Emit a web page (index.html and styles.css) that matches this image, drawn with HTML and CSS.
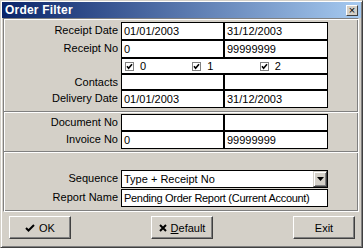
FILE: index.html
```html
<!DOCTYPE html>
<html lang="en">
<head>
  <meta charset="UTF-8" />
  <title>Order Filter</title>
  <link rel="stylesheet" href="styles.css">
</head>
<body>
  <div class="window">
    <div class="titlebar">
      <span class="title">Order Filter</span>
      <span class="close">&#215;</span>
    </div>

    <div class="panel">
      <div class="row">
        <div class="label">Receipt Date</div>
        <div class="cell">01/01/2003</div>
        <div class="cell wide">31/12/2003</div>
      </div>
      <div class="row">
        <div class="label">Receipt No</div>
        <div class="cell">0</div>
        <div class="cell wide">99999999</div>
      </div>
      <div class="row short">
        <div class="label"></div>
        <div class="cell full checks">
          <span class="check"><svg width="9" height="9" viewBox="0 0 9 9"><rect x="0.5" y="0.5" width="8" height="8" fill="#fff" stroke="#808080"/><path d="M2 4.2 L3.6 6.2 L7 2.2" fill="none" stroke="#000" stroke-width="1.6"/></svg>0</span>
          <span class="check"><svg width="9" height="9" viewBox="0 0 9 9"><rect x="0.5" y="0.5" width="8" height="8" fill="#fff" stroke="#808080"/><path d="M2 4.2 L3.6 6.2 L7 2.2" fill="none" stroke="#000" stroke-width="1.6"/></svg>1</span>
          <span class="check"><svg width="9" height="9" viewBox="0 0 9 9"><rect x="0.5" y="0.5" width="8" height="8" fill="#fff" stroke="#808080"/><path d="M2 4.2 L3.6 6.2 L7 2.2" fill="none" stroke="#000" stroke-width="1.6"/></svg>2</span>
        </div>
      </div>
      <div class="row short">
        <div class="label">Contacts</div>
        <div class="cell"></div>
        <div class="cell wide"></div>
      </div>
      <div class="row">
        <div class="label">Delivery Date</div>
        <div class="cell">01/01/2003</div>
        <div class="cell wide">31/12/2003</div>
      </div>

      <div class="sep"></div>

      <div class="row doc">
        <div class="label">Document No</div>
        <div class="cell"></div>
        <div class="cell wide"></div>
      </div>
      <div class="row">
        <div class="label">Invoice No</div>
        <div class="cell">0</div>
        <div class="cell wide">99999999</div>
      </div>

      <div class="sep sep2"></div>

      <div class="row seq">
        <div class="label">Sequence</div>
        <div class="cell full combo">
          <span>Type + Receipt No</span>
          <span class="drop"><svg width="7" height="4" viewBox="0 0 7 4"><path d="M0 0 H7 L3.5 4 Z" fill="#000"/></svg></span>
        </div>
      </div>
      <div class="row report">
        <div class="label">Report Name</div>
        <div class="cell full narrow">Pending Order Report (Current Account)</div>
      </div>
    </div>

    <div class="buttons">
      <button class="btn">
        <svg width="10" height="8" viewBox="0 0 10 8"><path d="M1 4 L3.5 6.5 L9 1" fill="none" stroke="#000" stroke-width="2"/></svg>
        OK
      </button>
      <button class="btn">
        <svg width="8" height="8" viewBox="0 0 8 8"><path d="M1 1 L7 7 M7 1 L1 7" stroke="#000" stroke-width="2"/></svg>
        <span><u>D</u>efault</span>
      </button>
      <button class="btn">Exit</button>
    </div>
  </div>
</body>
</html>
```

FILE: styles.css
```css
body {
  margin: 0;
  background-color: #d4d0c8;
  font-family: "Liberation Sans", Arial, sans-serif;
  font-size: 11px;
  color: #000;
}

.window {
  width: 363px;
  height: 248px;
  box-sizing: border-box;
  padding: 1px;
  border: 1px solid;
  border-color: #d4d0c8 #404040 #404040 #d4d0c8;
  box-shadow: inset 1px 1px #fff, inset -1px -1px #808080;
  background-color: #d4d0c8;
}

.titlebar {
  height: 16px;
  display: flex;
  align-items: center;
  justify-content: space-between;
  background: linear-gradient(to right, #0a246a, #a6caf0);
  padding: 0 3px 0 3px;
}

.title {
  color: #fff;
  font-weight: bold;
  font-size: 12px;
  letter-spacing: 0.2px;
}

.close {
  width: 12px;
  height: 11px;
  box-sizing: border-box;
  background-color: #d4d0c8;
  border: 1px solid;
  border-color: #fff #404040 #404040 #fff;
  font-size: 11px;
  line-height: 8px;
  text-align: center;
}

.panel {
  margin: 0 2px 0 1px;
  height: 194px;
  box-sizing: border-box;
  padding-top: 3px;
  border: 1px solid;
  border-color: #808080 #fff #fff #808080;
  box-shadow: inset 1px 1px #fff, inset -1px -1px #808080;
}

.row {
  display: flex;
  height: 18px;
}

.row.short {
  height: 16px;
}

.row.doc {
  height: 17px;
}

.label {
  width: 117px;
  box-sizing: border-box;
  padding-right: 3px;
  text-align: right;
  line-height: 17px;
}

.cell {
  width: 103px;
  box-sizing: border-box;
  border: 1px solid #000;
  background-color: #fff;
  padding-left: 2px;
  line-height: 16px;
  white-space: nowrap;
  overflow: hidden;
}

.short .cell {
  line-height: 14px;
}

.cell.wide {
  width: 104px;
}

.cell.full {
  width: 207px;
}

.cell.narrow {
  letter-spacing: -0.3px;
}

.checks {
  display: flex;
  padding-left: 3px;
}

.check {
  width: 68.5px;
  display: flex;
  align-items: center;
  gap: 6px;
}

.sep {
  margin: 3px 0 1px;
  border-top: 1px solid #808080;
  border-bottom: 1px solid #fff;
}

.sep2 {
  margin: 2px 0 17px;
}

.combo {
  display: flex;
  justify-content: space-between;
  padding-right: 0;
}

.drop {
  width: 14px;
  height: 16px;
  box-sizing: border-box;
  background-color: #d4d0c8;
  border: 1px solid;
  border-color: #d4d0c8 #404040 #404040 #d4d0c8;
  box-shadow: inset 1px 1px #fff, inset -1px -1px #808080;
  display: flex;
  align-items: center;
  justify-content: center;
}

.report {
  margin-top: 1px;
}

.buttons {
  display: flex;
  justify-content: space-between;
  padding: 0 6px 0 7px;
  margin-top: 4px;
}

.btn {
  width: 62px;
  height: 23px;
  box-sizing: border-box;
  background-color: #d4d0c8;
  border: 1px solid;
  border-color: #fff #404040 #404040 #fff;
  box-shadow: inset -1px -1px #808080;
  font-family: "Liberation Sans", Arial, sans-serif;
  font-size: 11px;
  color: #000;
  display: flex;
  align-items: center;
  justify-content: center;
  gap: 4px;
  padding: 0;
}
```
